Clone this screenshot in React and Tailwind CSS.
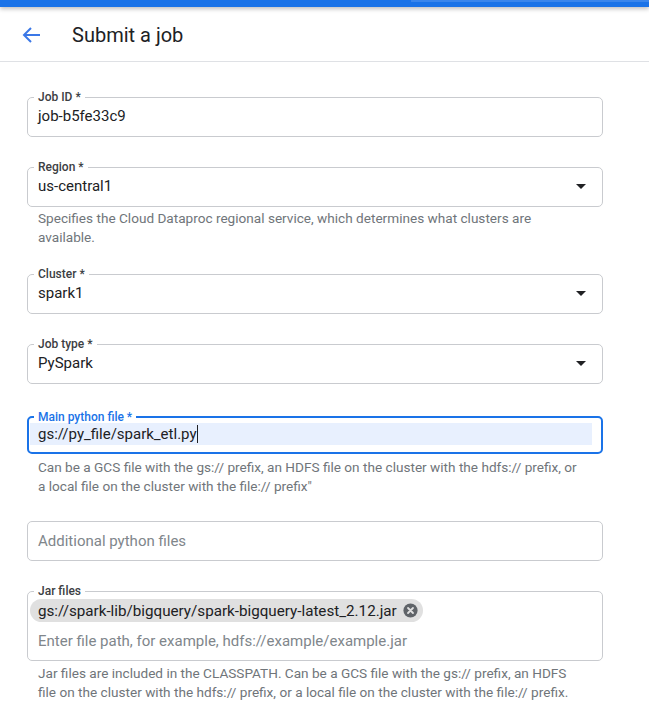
import React from "react";

const font = { fontFamily: "Roboto, 'Liberation Sans', Arial, sans-serif" };

function Caret() {
  return (
    <svg width="10" height="5" viewBox="0 0 10 5" className="shrink-0">
      <path d="M0 0 L10 0 L5 5 Z" fill="#202124" />
    </svg>
  );
}

function Field({ label, value, dropdown, className = "" }) {
  return (
    <fieldset className={"border border-[#c9cbcf] rounded-[5px] pl-[10px] pr-[16px] pb-[11px] " + className}>
      <legend className="-ml-[4px] px-[4px] text-[12px] leading-[14px] text-[#3c4043] font-medium">{label}</legend>
      <div className="flex items-center justify-between pt-[3px]">
        <span className="text-[15px] leading-[18px] text-[#202124]">{value}</span>
        {dropdown && <Caret />}
      </div>
    </fieldset>
  );
}

function Helper({ children, className = "" }) {
  return (
    <p className={"pl-[11px] pr-[20px] text-[13.6px] leading-[19px] text-[#70757a] " + className}>{children}</p>
  );
}

export default function App() {
  return (
    <div style={font} className="w-[649px] h-[720px] bg-white overflow-hidden">
      <div className="relative h-[7px] bg-[#1a73e8] shadow-[0_2px_4px_rgba(0,0,0,0.25)]">
        <div className="ml-[411px] h-[2px] bg-[#3a86ec]" />
      </div>
      <div className="flex items-center h-[55px] border-b border-[#dfe1e5]">
        <svg width="19" height="16" viewBox="0 0 19 16" className="ml-[22px] mt-[2px]">
          <path d="M2 8 H18 M9 1 L2 8 L9 15" fill="none" stroke="#3b78e7" strokeWidth="2" />
        </svg>
        <h1 className="ml-[31px] mt-[1px] text-[20px] leading-[24px] text-[#202124]">Submit a job</h1>
      </div>
      <div className="pl-[27px] pr-[46px]">
        <Field label="Job ID *" value="job-b5fe33c9" className="mt-[28px]" />
        <Field label="Region *" value="us-central1" dropdown className="mt-[23px]" />
        <Helper className="mt-[2px]">
          Specifies the Cloud Dataproc regional service, which determines what clusters are available.
        </Helper>
        <Field label="Cluster *" value="spark1" dropdown className="mt-[20px]" />
        <Field label="Job type *" value="PySpark" dropdown className="mt-[23px]" />

        <fieldset className="mt-[26px] border-2 border-[#1a73e8] rounded-[5px] pl-[1px] pr-[9px] pb-[7px]">
          <legend className="ml-[4px] px-[4px] text-[12px] leading-[14px] text-[#1a73e8] font-medium">Main python file *</legend>
          <div className="flex items-center h-[22px] bg-[#e8f0fe] pl-[8px] -mt-[1px]">
            <span className="text-[15px] leading-[18px] text-[#202124]">gs://py_file/spark_etl.py</span>
            <span className="w-px h-[18px] bg-[#202124]" />
          </div>
        </fieldset>
        <Helper className="mt-[4px]">
          Can be a GCS file with the gs:// prefix, an HDFS file on the cluster with the hdfs:// prefix, or a local file on the cluster with the file:// prefix"
        </Helper>

        <div className="mt-[25px] h-[40px] border border-[#c9cbcf] rounded-[5px] flex items-center pl-[10px]">
          <span className="text-[15px] leading-[18px] text-[#80868b]">Additional python files</span>
        </div>

        <fieldset className="mt-[23px] border border-[#c9cbcf] rounded-[5px] pl-[2px] pr-[16px] pb-[10px]">
          <legend className="ml-[4px] px-[4px] text-[12px] leading-[14px] text-[#3c4043] font-medium">Jar files</legend>
          <div className="flex">
            <div className="flex items-center h-[23px] rounded-full bg-[#e0e0e0] pl-[8px] pr-[4px] mt-[1px]">
              <span className="text-[15.2px] leading-[18px] text-[#202124]">gs://spark-lib/bigquery/spark-bigquery-latest_2.12.jar</span>
              <svg width="17" height="17" viewBox="0 0 24 24" className="ml-[5px]">
                <circle cx="12" cy="12" r="10" fill="#5f6368" />
                <path d="M8.5 8.5 L15.5 15.5 M15.5 8.5 L8.5 15.5" stroke="#e0e0e0" strokeWidth="2.6" strokeLinecap="round" />
              </svg>
            </div>
          </div>
          <div className="pl-[8px] mt-[10px] text-[15px] leading-[18px] text-[#80868b]">
            Enter file path, for example, hdfs://example/example.jar
          </div>
        </fieldset>
        <Helper className="mt-[3px]">
          Jar files are included in the CLASSPATH. Can be a GCS file with the gs:// prefix, an HDFS file on the cluster with the hdfs:// prefix, or a local file on the cluster with the file:// prefix.
        </Helper>
      </div>
    </div>
  );
}
